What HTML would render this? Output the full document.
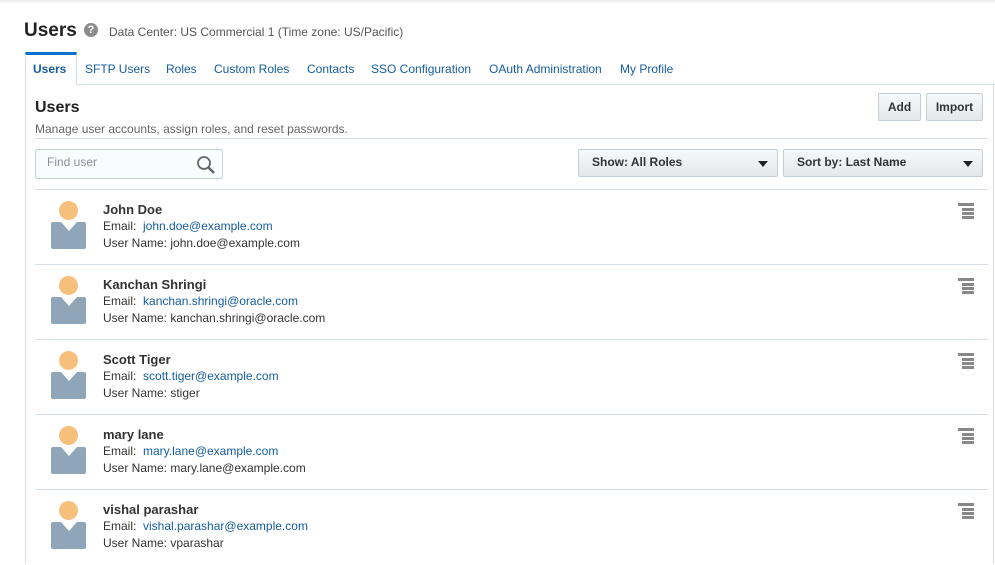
<!DOCTYPE html>
<html><head><style>
*{margin:0;padding:0;box-sizing:border-box}
body{width:995px;height:559px;overflow:hidden;background:#fff;font-family:"Liberation Sans",Arial,sans-serif;position:relative;color:#333}
.a{position:absolute}
.topbar{left:0;top:0;width:995px;height:4px;background:linear-gradient(#eaeaea,#fff)}
h1{position:absolute;left:24px;top:20px;font-size:19px;font-weight:bold;color:#222}
.help{left:84px;top:23px;width:14px;height:14px;border-radius:50%;background:#8c8c8c;color:#fff;font-size:11px;font-weight:bold;text-align:center;line-height:14px}
.dc{left:109px;top:25px;font-size:12px;color:#555}
.tabline{left:76px;top:84px;width:919px;height:1px;background:#d6dfe6}
.tab{top:62px;font-size:12px;color:#145c9e}
.act{left:25px;top:52px;width:52px;height:33px;border-top:3px solid #0572ce;border-left:1px solid #d6dfe6;border-right:1px solid #d6dfe6;background:#fff}
.panel{left:25px;top:84px;width:969px;height:480px;border-left:1px solid #d6dfe6;border-right:1px solid #d6dfe6}
.hr{left:35px;width:953px;height:1px;background:#d6dfe6}
.btn{top:93px;height:28px;border:1px solid #c4ced7;border-radius:2px;background:linear-gradient(#f7f8f9,#e4e8ea);font-size:12px;font-weight:bold;color:#333;text-align:center;line-height:26px}
.sel{top:149px;height:28px;border:1px solid #c4ced7;border-radius:2px;background:linear-gradient(#f7f8f9,#e4e8ea);font-size:12px;font-weight:bold;color:#333;line-height:24px;padding-left:13px}
.sel:after{content:"";position:absolute;right:9px;top:11px;border-left:5px solid transparent;border-right:5px solid transparent;border-top:6px solid #222}
.search{left:35px;top:149px;width:188px;height:30px;border:1px solid #c4ced7;border-radius:3px;background:#f9fbfd;font-size:12px;color:#8a939b;padding:5px 0 0 11px}
.row{left:35px;width:953px;height:75px}
.head{left:24px;top:11px;width:19px;height:19px;border-radius:50%;background:#f6c07c}
.bodyv{left:16px;top:32px;width:35px;height:27px;background:#8fa6b8;border-radius:2px}
.notch{left:26px;top:32px;border-left:8px solid transparent;border-right:8px solid transparent;border-top:9px solid #fff}
.nm{left:68px;top:12px;font-size:13px;font-weight:bold;color:#333}
.ln{left:68px;font-size:12px;color:#333}
.ln span{color:#145c9e}
.ic1{left:923px;top:13px;width:16px;height:3px;background:#888}
.ic2{left:927px;width:12px;height:2.5px;background:#888}
</style></head><body>
<div class="a topbar"></div>
<h1>Users</h1>
<div class="a help">?</div>
<div class="a dc">Data Center: US Commercial 1 (Time zone: US/Pacific)</div>
<div class="a panel"></div>
<div class="a tabline"></div>
<div class="a act"></div>
<div class="a tab" style="left:33px;font-weight:bold">Users</div>
<div class="a tab" style="left:85px">SFTP Users</div>
<div class="a tab" style="left:166px">Roles</div>
<div class="a tab" style="left:214px">Custom Roles</div>
<div class="a tab" style="left:307px">Contacts</div>
<div class="a tab" style="left:371px">SSO Configuration</div>
<div class="a tab" style="left:489px">OAuth Administration</div>
<div class="a tab" style="left:620px">My Profile</div>
<div class="a" style="left:35px;top:99px;font-size:16px;font-weight:bold;color:#222">Users</div>
<div class="a" style="left:35px;top:122px;font-size:12px;color:#666">Manage user accounts, assign roles, and reset passwords.</div>
<div class="a btn" style="left:878px;width:43px">Add</div>
<div class="a btn" style="left:926px;width:57px">Import</div>
<div class="a hr" style="top:138px"></div>
<div class="a search">Find user
<svg class="a" style="left:160px;top:5px" width="20" height="20" viewBox="0 0 20 20"><circle cx="8" cy="8" r="6" fill="none" stroke="#666" stroke-width="1.8"/><line x1="12.5" y1="12.5" x2="18" y2="18" stroke="#666" stroke-width="2.6"/></svg></div>
<div class="a sel" style="left:578px;width:200px">Show: All Roles</div>
<div class="a sel" style="left:783px;width:200px">Sort by: Last Name</div>
<div class="a hr" style="top:189px"></div>

<div class="a row" style="top:190px">
<div class="a head"></div><div class="a bodyv"></div><div class="a notch"></div>
<div class="a nm">John Doe</div>
<div class="a ln" style="top:29px">Email: &nbsp;<span>john.doe@example.com</span></div>
<div class="a ln" style="top:46px">User Name: john.doe@example.com</div>
<div class="a ic1"></div><div class="a ic2" style="top:18px"></div><div class="a ic2" style="top:22px"></div><div class="a ic2" style="top:26px"></div>
</div>
<div class="a hr" style="top:264px"></div>
<div class="a row" style="top:265px">
<div class="a head"></div><div class="a bodyv"></div><div class="a notch"></div>
<div class="a nm">Kanchan Shringi</div>
<div class="a ln" style="top:29px">Email: &nbsp;<span>kanchan.shringi@oracle.com</span></div>
<div class="a ln" style="top:46px">User Name: kanchan.shringi@oracle.com</div>
<div class="a ic1"></div><div class="a ic2" style="top:18px"></div><div class="a ic2" style="top:22px"></div><div class="a ic2" style="top:26px"></div>
</div>
<div class="a hr" style="top:339px"></div>
<div class="a row" style="top:340px">
<div class="a head"></div><div class="a bodyv"></div><div class="a notch"></div>
<div class="a nm">Scott Tiger</div>
<div class="a ln" style="top:29px">Email: &nbsp;<span>scott.tiger@example.com</span></div>
<div class="a ln" style="top:46px">User Name: stiger</div>
<div class="a ic1"></div><div class="a ic2" style="top:18px"></div><div class="a ic2" style="top:22px"></div><div class="a ic2" style="top:26px"></div>
</div>
<div class="a hr" style="top:414px"></div>
<div class="a row" style="top:415px">
<div class="a head"></div><div class="a bodyv"></div><div class="a notch"></div>
<div class="a nm">mary lane</div>
<div class="a ln" style="top:29px">Email: &nbsp;<span>mary.lane@example.com</span></div>
<div class="a ln" style="top:46px">User Name: mary.lane@example.com</div>
<div class="a ic1"></div><div class="a ic2" style="top:18px"></div><div class="a ic2" style="top:22px"></div><div class="a ic2" style="top:26px"></div>
</div>
<div class="a hr" style="top:489px"></div>
<div class="a row" style="top:490px">
<div class="a head"></div><div class="a bodyv"></div><div class="a notch"></div>
<div class="a nm">vishal parashar</div>
<div class="a ln" style="top:29px">Email: &nbsp;<span>vishal.parashar@example.com</span></div>
<div class="a ln" style="top:46px">User Name: vparashar</div>
<div class="a ic1"></div><div class="a ic2" style="top:18px"></div><div class="a ic2" style="top:22px"></div><div class="a ic2" style="top:26px"></div>
</div>
</body></html>
